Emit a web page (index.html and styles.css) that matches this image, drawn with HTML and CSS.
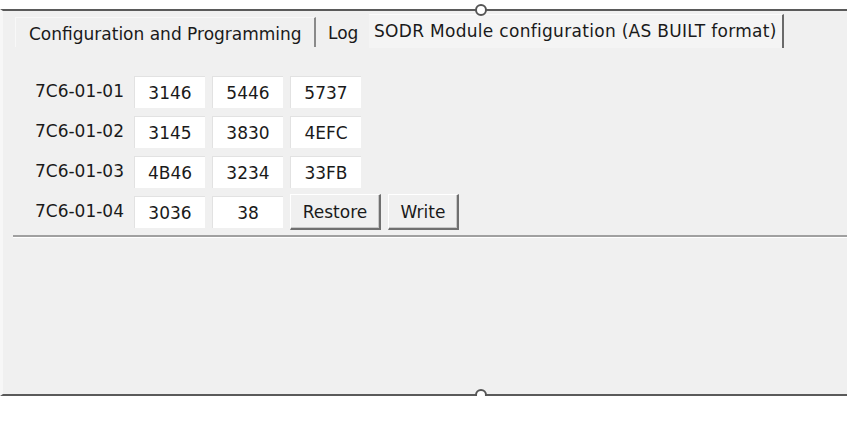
FILE: index.html
```html
<!DOCTYPE html>
<html>
<head>
<meta charset="utf-8">
<link rel="stylesheet" href="styles.css">
</head>
<body>
<div class="frame">
  <span class="handle handle-top"></span>
  <div class="tabs">
    <div class="tab tab-first">Configuration and Programming</div>
    <div class="tab tab-log">Log</div>
    <div class="tab tab-active">SODR Module configuration (AS BUILT format)</div>
  </div>
  <div class="panel">
    <div class="row">
      <span class="label">7C6-01-01</span>
      <span class="box">3146</span>
      <span class="box">5446</span>
      <span class="box">5737</span>
    </div>
    <div class="row">
      <span class="label">7C6-01-02</span>
      <span class="box">3145</span>
      <span class="box">3830</span>
      <span class="box">4EFC</span>
    </div>
    <div class="row">
      <span class="label">7C6-01-03</span>
      <span class="box">4B46</span>
      <span class="box">3234</span>
      <span class="box">33FB</span>
    </div>
    <div class="row">
      <span class="label">7C6-01-04</span>
      <span class="box">3036</span>
      <span class="box">38</span>
      <button class="btn btn-restore">Restore</button>
      <button class="btn btn-write">Write</button>
    </div>
  </div>
  <div class="sep"></div>
  <span class="handle handle-bottom"></span>
</div>
</body>
</html>
```
FILE: styles.css
```css
html, body {
  margin: 0;
  padding: 0;
  background: #ffffff;
}
body {
  font-family: "DejaVu Sans", sans-serif;
  font-size: 17px;
  color: #1a1a1a;
}
.frame {
  position: relative;
  margin-top: 9px;
  height: 387px;
  box-sizing: border-box;
  border-top: 2px solid #5a5a5a;
  border-bottom: 2px solid #5a5a5a;
  border-left: 3px solid #f7f7f7;
  background: #f0f0f0;
}
.handle {
  position: absolute;
  left: 472px;
  width: 8px;
  height: 8px;
  border: 2px solid #555;
  border-radius: 50%;
  background: #fff;
}
.handle-top { top: -7px; }
.handle-bottom { bottom: -7px; }
.tabs {
  display: flex;
  align-items: flex-end;
  padding-left: 12px;
  padding-top: 3px;
  height: 34px;
}
.tab {
  box-sizing: border-box;
  white-space: nowrap;
}
.tab-first {
  width: 301px;
  padding-left: 13px;
  border-top: 1px solid #f8f8f8;
  border-left: 1px solid #f8f8f8;
  border-right: 2px solid #8a8a8a;
  height: 30px;
  line-height: 32px;
  margin-bottom: 1px;
}
.tab-log {
  width: 53px;
  padding-left: 12px;
  height: 30px;
  line-height: 32px;
  margin-bottom: 1px;
}
.tab-active {
  width: 415px;
  height: 34px;
  line-height: 33px;
  padding-left: 5px;
  letter-spacing: 0.3px;
  background: #f4f4f4;
  border-right: 2px solid #6a6a6a;
  border-top: 1px solid #fbfbfb;
}
.panel {
  display: flex;
  flex-direction: column;
  gap: 8px;
  padding-top: 28px;
  padding-left: 31px;
}
.row {
  display: flex;
  align-items: center;
  height: 32px;
}
.label {
  width: 90px;
  margin-right: 10px;
  text-align: right;
  position: relative;
  top: -1px;
}
.box {
  box-sizing: border-box;
  width: 71px;
  height: 32px;
  margin-right: 7px;
  background: #fff;
  border-top: 1px solid #e2e2e2;
  border-left: 1px solid #e2e2e2;
  text-align: center;
  line-height: 32px;
}
.btn {
  box-sizing: border-box;
  height: 36px;
  margin-right: 7px;
  font: inherit;
  color: #1a1a1a;
  background: #f0f0f0;
  border-top: 1px solid #ffffff;
  border-left: 1px solid #ffffff;
  border-right: 2px solid #707070;
  border-bottom: 2px solid #707070;
  padding: 0;
  box-shadow: inset -1px -1px 0 #c8c8c8;
}
.btn-restore { width: 91px; }
.btn-write { width: 71px; }
.sep {
  margin-top: 7px;
  margin-left: 10px;
  height: 2px;
  background: #a0a0a0;
  border-bottom: 1px solid #ffffff;
}
```
